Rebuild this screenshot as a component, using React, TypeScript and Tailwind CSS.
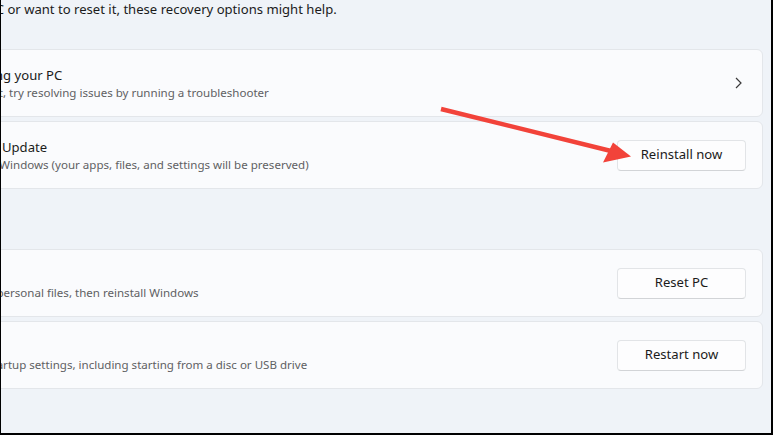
import React from "react";

interface Row {
  title: string;
  desc: string;
  action?: string;
}

const topRows: Row[] = [
  {
    title: "Fix problems without resetting your PC",
    desc: "Resetting can take a while — first, try resolving issues by running a troubleshooter",
  },
  {
    title: "Fix problems using Windows Update",
    desc: "Reinstall your current version of Windows (your apps, files, and settings will be preserved)",
    action: "Reinstall now",
  },
];

const optionRows: Row[] = [
  {
    title: "Reset this PC",
    desc: "Choose to keep or remove your personal files, then reinstall Windows",
    action: "Reset PC",
  },
  {
    title: "Advanced startup",
    desc: "Restart your device to change startup settings, including starting from a disc or USB drive",
    action: "Restart now",
  },
];

const Card: React.FC<{ row: Row }> = ({ row }) => (
  <div className="h-[68px] flex items-center pl-4 pr-4 bg-[#fafbfd] border border-[#e3e6ea] rounded-md">
    <div className="w-[24px] h-5 mr-4 shrink-0" />
    <div className="flex-1 min-w-0">
      <div className="text-[13.1px] leading-5 text-[#1b1b1b] whitespace-nowrap">{row.title}</div>
      <div className="text-[11.55px] leading-4 text-[#5f6163] whitespace-nowrap">{row.desc}</div>
    </div>
    {row.action ? (
      <button className="w-[129px] h-[31px] shrink-0 bg-[#fdfdfe] border border-[#e2e4e7] border-b-[#d2d4d7] rounded-[4px] text-[13.1px] text-[#1b1b1b]">
        {row.action}
      </button>
    ) : (
      <svg width="16" height="16" viewBox="0 0 16 16" className="shrink-0">
        <path d="M6 3 L11 8 L6 13" fill="none" stroke="#3a3a3a" strokeWidth="1.2" />
      </svg>
    )}
  </div>
);

export default function App() {
  return (
    <div className="relative w-[773px] h-[435px] overflow-hidden bg-[#eff3f8] border-l border-r-2 border-b-2 border-black font-['Noto_Sans',sans-serif]">
      <div className="ml-[-235px] mr-[8px] flex flex-col">
        <p className="mt-[-1px] text-[13.1px] leading-5 text-[#1b1b1b] whitespace-nowrap">
          If you're having problems with your PC or want to reset it, these recovery options might help.
        </p>
        <div className="mt-[30px] flex flex-col gap-1">
          {topRows.map((r) => (
            <Card key={r.title} row={r} />
          ))}
        </div>
        <h2 className="h-[60px] flex items-center text-[13.1px] font-semibold text-[#1b1b1b]">
          Recovery options
        </h2>
        <div className="flex flex-col gap-1">
          {optionRows.map((r) => (
            <Card key={r.title} row={r} />
          ))}
        </div>
      </div>
      <svg className="absolute inset-0 pointer-events-none" width="773" height="435">
        <line x1="440" y1="109" x2="610" y2="151" stroke="#f2433a" strokeWidth="4.5" />
        <polygon points="630,156.5 602,162.5 612,142.5" fill="#f2433a" />
      </svg>
    </div>
  );
}
